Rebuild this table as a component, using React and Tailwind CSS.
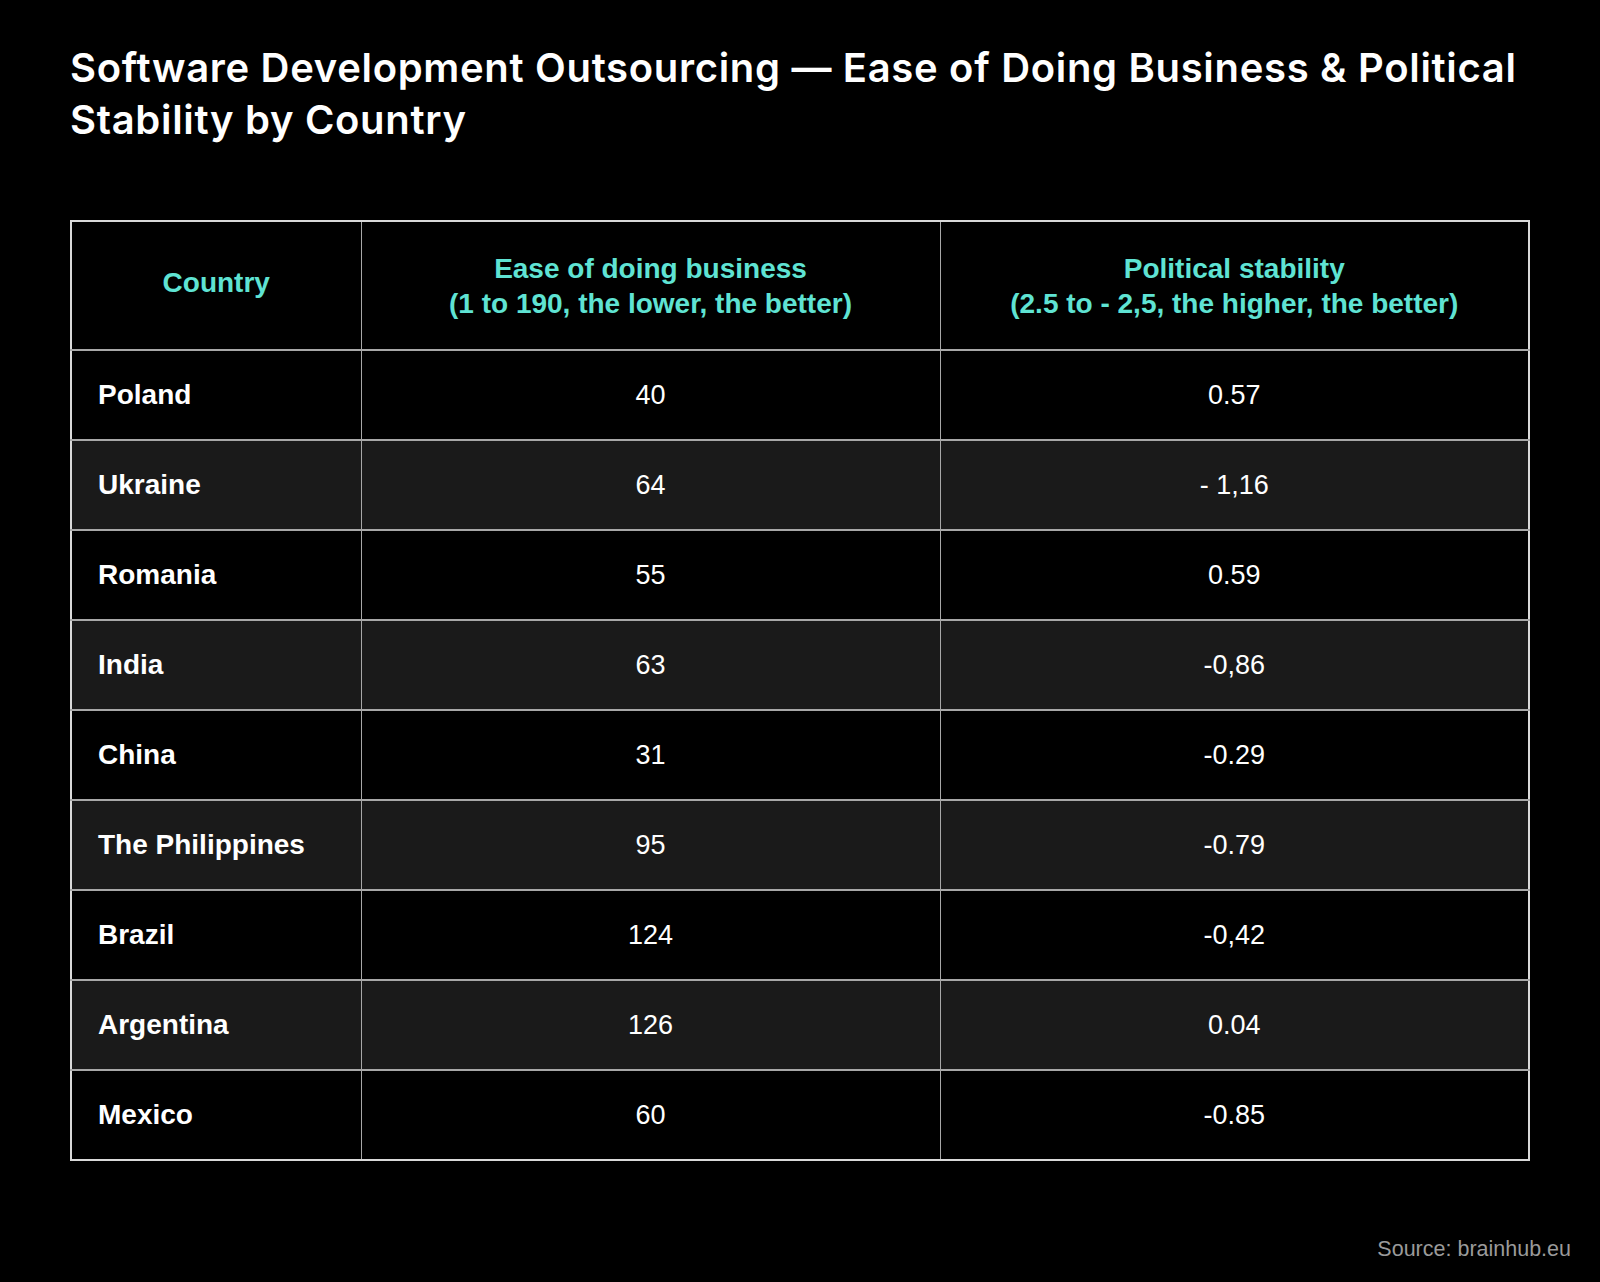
const rows = [
  { country: 'Poland', ease: '40', stability: '0.57' },
  { country: 'Ukraine', ease: '64', stability: '- 1,16' },
  { country: 'Romania', ease: '55', stability: '0.59' },
  { country: 'India', ease: '63', stability: '-0,86' },
  { country: 'China', ease: '31', stability: '-0.29' },
  { country: 'The Philippines', ease: '95', stability: '-0.79' },
  { country: 'Brazil', ease: '124', stability: '-0,42' },
  { country: 'Argentina', ease: '126', stability: '0.04' },
  { country: 'Mexico', ease: '60', stability: '-0.85' },
];

export default function App() {
  return (
    <div className="w-[1600px] h-[1282px] bg-black text-white flex flex-col px-[70px] pt-[42px]" style={{ fontFamily: '"Liberation Sans", Arial, sans-serif' }}>
      <h1
        className="text-[40px] leading-[52px] font-semibold tracking-[0.017em] text-white whitespace-nowrap"
        style={{ fontFamily: 'Inter, "Liberation Sans", sans-serif' }}
      >
        Software Development Outsourcing — Ease of Doing Business & Political
        <br />
        Stability by Country
      </h1>

      {/* Table */}
      <table className="mt-[74px] w-[1458px] table-fixed border-collapse border-2 border-[#d9d9d9]">
        <colgroup>
          <col className="w-[290px]" />
          <col className="w-[579px]" />
          <col className="w-[589px]" />
        </colgroup>
        <thead>
          <tr className="h-[129px] text-[#5fe3d3] text-[28px] leading-[35px] font-bold">
            <th className="border-r border-[#a8a8a8] text-center font-bold pb-[6px]">Country</th>
            <th className="border-r border-[#a8a8a8] text-center font-bold">
              Ease of doing business
              <br />
              (1 to 190, the lower, the better)
            </th>
            <th className="text-center font-bold">
              Political stability
              <br />
              (2.5 to - 2,5, the higher, the better)
            </th>
          </tr>
        </thead>
        <tbody>
          {rows.map((r, i) => (
            <tr
              key={r.country}
              className={`h-[90px] border-t-2 border-[#a8a8a8] ${i % 2 === 1 ? 'bg-[#1a1a1a]' : 'bg-black'}`}
            >
              <td className="border-r border-[#a8a8a8] pl-[26px] text-[28px] font-bold">{r.country}</td>
              <td className="border-r border-[#a8a8a8] text-center text-[27px]">{r.ease}</td>
              <td className="text-center text-[27px]">{r.stability}</td>
            </tr>
          ))}
        </tbody>
      </table>

      <div className="flex justify-end mt-auto mb-[17px]">
        <span className="text-[21.5px] text-[#9a9a9a] mr-[-41px]">Source: brainhub.eu</span>
      </div>
    </div>
  );
}
